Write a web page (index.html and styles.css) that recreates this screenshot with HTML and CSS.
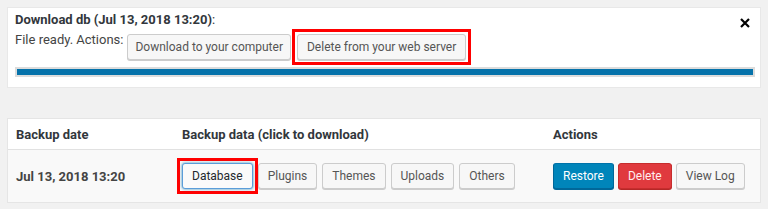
FILE: index.html
```html
<!DOCTYPE html>
<html lang="en">
<head>
  <meta charset="UTF-8">
  <meta name="viewport" content="width=device-width, initial-scale=1.0">
  <title>Existing Backups</title>
  <link rel="stylesheet" href="styles.css">
</head>
<body>

  <div class="notice">
    <div class="notice-title">
      <span><strong>Download db (Jul 13, 2018 13:20)</strong>:</span>
      <button type="button" class="dismiss" aria-label="Close">
        <svg width="10" height="10" viewBox="0 0 10 10">
          <path d="M1 1L9 9M9 1L1 9" stroke="#000" stroke-width="2.2" fill="none"/>
        </svg>
      </button>
    </div>
    <div class="notice-actions">
      <span class="notice-label">File ready. Actions:</span>
      <button type="button" class="button button-wide">Download to your computer</button>
      <span class="mark mark-spaced">
        <button type="button" class="button">Delete from your web server</button>
      </span>
    </div>
    <div class="progress"><div class="progress-fill"></div></div>
  </div>

  <div class="backups">
    <div class="backups-row backups-head">
      <div>Backup date</div>
      <div>Backup data (click to download)</div>
      <div>Actions</div>
    </div>
    <div class="backups-row backups-item">
      <div class="backup-date">Jul 13, 2018 13:20</div>
      <div class="button-group">
        <span class="mark">
          <button type="button" class="button focused">Database</button>
        </span>
        <button type="button" class="button">Plugins</button>
        <button type="button" class="button">Themes</button>
        <button type="button" class="button">Uploads</button>
        <button type="button" class="button">Others</button>
      </div>
      <div class="button-group">
        <button type="button" class="button primary">Restore</button>
        <button type="button" class="button danger">Delete</button>
        <button type="button" class="button">View Log</button>
      </div>
    </div>
  </div>

</body>
</html>
```

FILE: styles.css
```css
* {
  margin: 0;
  padding: 0;
  box-sizing: border-box;
}

body {
  font-family: Roboto, 'Liberation Sans', sans-serif;
  font-size: 13px;
  color: #444;
  background: #f1f1f1;
  padding: 7px;
}

.notice {
  background: #fff;
  border: 1px solid #e8e8e8;
  padding: 4px 5px 10px 7px;
}

.notice-title {
  display: flex;
  justify-content: space-between;
  align-items: center;
  line-height: 16px;
  color: #32373c;
}

.notice-title strong {
  font-weight: bold;
}

.dismiss {
  background: none;
  border: none;
  width: 10px;
  height: 10px;
  margin: 5px 5px 0 0;
  display: flex;
}

.notice-actions {
  display: flex;
  align-items: flex-start;
  gap: 4px;
  margin-top: 6px;
}

.notice-label {
  line-height: 16px;
  margin-top: -2px;
}

.progress {
  margin-top: 7px;
  height: 10px;
  border: 2px solid #dcdcdc;
  background: #eee;
}

.progress-fill {
  height: 100%;
  width: 100%;
  background: #0572aa;
}

.button {
  font-family: inherit;
  font-size: 12px;
  height: 26px;
  line-height: 24px;
  padding: 0 9px;
  color: #555;
  background: #f7f7f7;
  border: 1px solid #ccc;
  border-radius: 3px;
  box-shadow: 0 1px 0 #ccc;
  white-space: nowrap;
  cursor: pointer;
}

.button-wide {
  padding: 0 7px;
}

/* red highlight box drawn round a button, not taking layout space */
.mark {
  display: flex;
  border: 3px solid #f00;
  padding: 2px;
  margin: -5px;
}

.mark-spaced {
  margin-left: -3px;
}

.button.focused {
  background: #fafafa;
  border-color: #5b9dd9;
  color: #23282d;
  box-shadow: 0 0 3px rgba(0, 115, 170, 0.8);
}

.button.primary {
  background: #0085ba;
  border-color: #0073aa #006799 #006799;
  box-shadow: 0 1px 0 #006799;
  color: #fff;
}

.button.danger {
  background: #e03a3e;
  border-color: #c62d2d;
  box-shadow: 0 1px 0 #b52727;
  color: #fee;
}

.backups {
  margin-top: 30px;
  background: #fff;
  border: 1px solid #e5e5e5;
}

.backups-row {
  display: grid;
  grid-template-columns: 166px 371px 1fr;
  align-items: center;
  padding: 0 8px;
}

.backups-head {
  height: 31px;
  border-bottom: 1px solid #e1e1e1;
  font-weight: bold;
  color: #32373c;
}

.backups-item {
  height: 52px;
  background: #f9f9f9;
}

.backup-date {
  font-weight: bold;
  color: #444;
}

.button-group {
  display: flex;
  gap: 5px;
}

.button-group + .button-group {
  gap: 4px;
}
```
